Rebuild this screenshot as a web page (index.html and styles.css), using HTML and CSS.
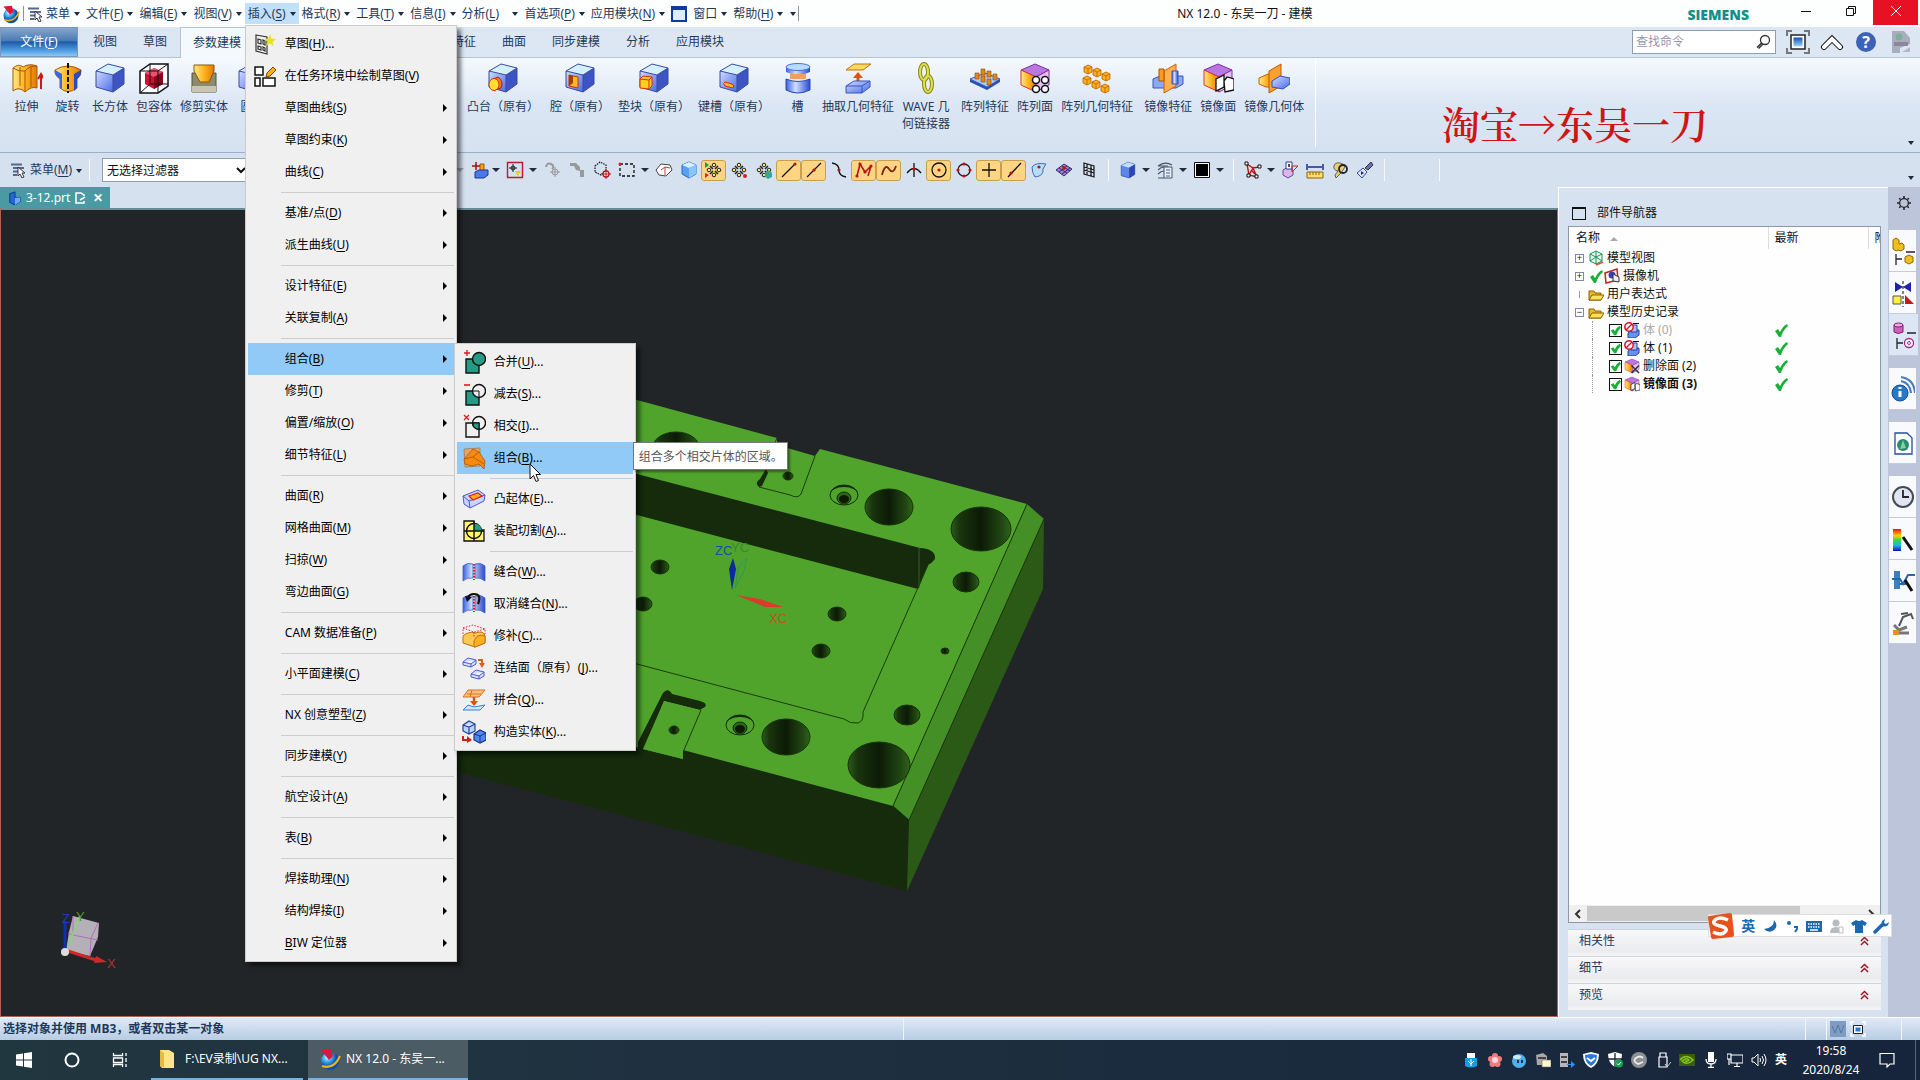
FILE: index.html
```html
<!DOCTYPE html>
<html lang="zh-CN">
<head>
<meta charset="utf-8">
<title>NX 12.0 - 东吴一刀 - 建模</title>
<link rel="stylesheet" href="styles.css">
</head>
<body>
<svg class="defs" width="0" height="0" aria-hidden="true">
  <defs>
    <linearGradient id="gOr" x1="0" x2="1"><stop offset="0" stop-color="#ffe98a"/><stop offset=".5" stop-color="#ffb21e"/><stop offset="1" stop-color="#e07808"/></linearGradient>
    <linearGradient id="gBl" x1="0" y1="0" x2="1" y2="1"><stop offset="0" stop-color="#cfdcff"/><stop offset="1" stop-color="#4a6ae8"/></linearGradient>
    <linearGradient id="gCy" x1="0" x2="1"><stop offset="0" stop-color="#3a5fe0"/><stop offset=".4" stop-color="#cfe0ff"/><stop offset="1" stop-color="#2b48d0"/></linearGradient>
    <linearGradient id="gHole" x1="0" x2="1"><stop offset="0" stop-color="#2c5c1a"/><stop offset=".15" stop-color="#19350e"/><stop offset=".5" stop-color="#0c1a06"/><stop offset=".85" stop-color="#214713"/><stop offset="1" stop-color="#2f6519"/></linearGradient>
    <linearGradient id="gRain" x1="0" y1="0" x2="0" y2="1"><stop offset="0" stop-color="#f01010"/><stop offset=".3" stop-color="#ffd000"/><stop offset=".5" stop-color="#30e040"/><stop offset=".75" stop-color="#20b0f0"/><stop offset="1" stop-color="#1010c0"/></linearGradient>
    <linearGradient id="gWin" x1="0" y1="0" x2="0" y2="1"><stop offset="0" stop-color="#0a50b0"/><stop offset="1" stop-color="#a8d4f4"/></linearGradient>
    <radialGradient id="gBall" cx=".35" cy=".3"><stop offset="0" stop-color="#e0f4ff"/><stop offset=".5" stop-color="#3aaaf0"/><stop offset="1" stop-color="#0a50a0"/></radialGradient>
  </defs>
  <symbol id="cube" viewBox="0 0 32 32"><path d="M2 9 14 2 30 6 19 13z" fill="#d4f0ff"/><path d="M2 9 19 13V30L2 25z" fill="url(#gBl)"/><path d="M19 13 30 6V22L19 30z" fill="#3d55c4"/><path d="M2 9 14 2 30 6 19 13zM2 9V25L19 30V13M19 30 30 22V6" fill="none" stroke="#3a4a9c"/></symbol>
  <symbol id="extrude" viewBox="0 0 32 32"><path d="M2 6Q8 1 12 5Q18 1 26 4V26Q20 24 14 30Q8 24 2 29z" fill="url(#gOr)" stroke="#a85a00"/><path d="M14 9V29M9 5V24M20 4V25" stroke="#a85a00"/><path d="M2 6Q8 10 14 9Q18 4 26 4" fill="none" stroke="#a85a00"/><path d="M30 27V14M27 17l3-5 3 5" stroke="#d01818" stroke-width="2" fill="none"/></symbol>
  <symbol id="revolve" viewBox="0 0 32 32"><path d="M3 8Q16 0 29 8Q30 13 25 17V26Q16 33 8 26V17Q2 13 3 8z" fill="url(#gOr)" stroke="#a85a00"/><path d="M3 8L10 12V27L8 26V17Q2 13 3 8z" fill="#3a66e0"/><path d="M22 12 29 8Q30 13 25 17V26L22 29z" fill="#2a4cc0"/><path d="M16 1V31" stroke="#111" stroke-width="2" stroke-dasharray="5 2"/></symbol>
  <symbol id="boxbody" viewBox="0 0 32 32"><path d="M2 9 12 2H30V24L20 31H2z" fill="#fff" stroke="#111" stroke-width="1.5"/><path d="M7 11 16 6 25 10V22L16 27 7 22z" fill="#d01030"/><path d="M7 11 16 15 25 10 16 6z" fill="#f05070"/><path d="M16 15V27L25 22V10z" fill="#90001c"/><path d="M2 9H20V31M20 9 30 2M12 2V22L2 31M12 22H30" fill="none" stroke="#111"/></symbol>
  <symbol id="trim" viewBox="0 0 32 32"><path d="M4 11H28V30H4z" fill="#8d8a70" stroke="#55553c"/><path d="M4 24H28V30H4z" fill="#c8c6b0"/><path d="M6 3H26V9L21 20H12L6 9z" fill="url(#gOr)" stroke="#8a5a00"/></symbol>
  <symbol id="boss" viewBox="0 0 32 32"><use href="#cube"/><path d="M6 17 11 15Q17 19 14 26L8 28z" fill="#e88010" stroke="#b02000"/><ellipse cx="7" cy="22.500" rx="5" ry="6" fill="#ffe030" stroke="#d03000"/></symbol>
  <symbol id="pocket" viewBox="0 0 32 32"><use href="#cube"/><path d="M5 13 14 15V26L5 24z" fill="#ffb820" stroke="#d03000"/><path d="M5 13 9 14V21L5 24z" fill="#a04000"/></symbol>
  <symbol id="pad" viewBox="0 0 32 32"><use href="#cube"/><path d="M2 17 5 14 14 15V24L11 27 2 26z" fill="#ffd020" stroke="#d03000"/><path d="M2 17 11 18V27M11 18 14 15" fill="none" stroke="#d03000"/></symbol>
  <symbol id="keyway" viewBox="0 0 32 32"><use href="#cube"/><path d="M7 20 14 22Q17 24 15 26L7 24Q4 21 7 20z" fill="#ffb820" stroke="#d03000"/></symbol>
  <symbol id="groove" viewBox="0 0 32 32"><path d="M4 5V10Q16 16 28 10V5z" fill="url(#gCy)"/><ellipse cx="16" cy="5" rx="12" ry="3.500" fill="#b8dcff" stroke="#4a70d0"/><path d="M8 12H24V17H8z" fill="#f0a060"/><path d="M4 17V28Q16 34 28 28V17Q16 22 4 17z" fill="url(#gCy)" stroke="#2b48b0"/></symbol>
  <symbol id="extract" viewBox="0 0 32 32"><path d="M4 8 12 2H29L21 8z" fill="#ffd860" stroke="#c07010"/><path d="M16 21V14" stroke="#e05010" stroke-width="3"/><path d="M11 16 16 10 21 16z" fill="#e05010"/><path d="M4 24 12 19H28V25L20 31H4z" fill="url(#gBl)" stroke="#3a55c0"/><path d="M4 24H20L28 19M20 24V31" fill="none" stroke="#3a55c0"/></symbol>
  <symbol id="wave" viewBox="0 0 32 32"><g fill="none" stroke="#8a8a10" stroke-width="4"><ellipse cx="14" cy="10" rx="4" ry="8"/><ellipse cx="18" cy="22" rx="4" ry="8"/></g><g fill="none" stroke="#dede58" stroke-width="2"><ellipse cx="14" cy="10" rx="4" ry="8"/><ellipse cx="18" cy="22" rx="4" ry="8"/></g></symbol>
  <symbol id="patfeat" viewBox="0 0 32 32"><path d="M1 17 16 11 31 17V20L18 28 1 20z" fill="#2a50b8"/><path d="M1 17 16 11 31 17 18 25z" fill="#a8ccff" stroke="#3a60c0"/><g fill="#e08818" stroke="#8a4a08" stroke-width=".6"><path d="M6 11h4v6H6zM12 7h4v6h-4zM18 9h4v6h-4zM24 12h4v6h-4zM12 14h4v6h-4zM18 17h4v6h-4z"/></g></symbol>
  <symbol id="facecube" viewBox="0 0 32 32"><path d="M2 8 16 2 30 8 17 15z" fill="#b878e0" stroke="#8030a0"/><path d="M2 8 17 15V30L2 23z" fill="url(#gOr)" stroke="#e03030"/><path d="M17 15 30 8V23L17 30z" fill="#e4c0f0" stroke="#8030a0"/></symbol>
  <symbol id="patface" viewBox="0 0 32 32"><use href="#facecube"/><g fill="#fff" stroke="#111" stroke-width="1.500"><circle cx="17" cy="18" r="3.500"/><circle cx="26" cy="18" r="3.500"/><circle cx="17" cy="27" r="3.500"/><circle cx="26" cy="27" r="3.500"/></g></symbol>
  <symbol id="patgeo" viewBox="0 0 32 32"><g fill="#ffb020" stroke="#b86000" stroke-width=".8"><path id="pgc" d="M3 5l4-2 4 2v5l-4 2-4-2zM3 5l4 2v5M7 7l4-2"/><use href="#pgc" x="9" y="3"/><use href="#pgc" x="18" y="7"/><use href="#pgc" x="-1" y="11"/><use href="#pgc" x="8" y="15"/><use href="#pgc" x="17" y="19"/></g></symbol>
  <symbol id="mirfeat" viewBox="0 0 32 32"><path d="M1 17 8 14H31V22L24 26H1z" fill="#8aaaf0" stroke="#3a55c0"/><path d="M12 9 24 2V24L12 31z" fill="#ffb050" stroke="#d06000"/><path d="M7 7h5v12H7z" fill="#ff9a20" stroke="#b05000"/><path d="M20 9h6v13h-6z" fill="url(#gCy)" stroke="#3a55c0"/></symbol>
  <symbol id="mirface" viewBox="0 0 32 32"><use href="#facecube"/><path d="M14 17 22 13V25L14 29zM22 19 25 15 32 17V28L23 30z" fill="#fff" stroke="#111" stroke-width="1.300"/></symbol>
  <symbol id="mirgeo" viewBox="0 0 32 32"><path d="M1 16 10 12H16V25H8L1 22z" fill="url(#gOr)" stroke="#c06000"/><path d="M11 9 23 2V24L11 31z" fill="#f8a030" stroke="#c05800"/><path d="M14 19 22 14 32 16V22L25 27 14 25z" fill="url(#gBl)" stroke="#3050c0"/></symbol>
  <symbol id="nx" viewBox="0 0 24 24"><circle cx="12" cy="14" r="9" fill="url(#gBall)"/><path d="M3 3 13 2 15 9 11 13z" fill="#d8183c"/><path d="M4 19Q16 23 22 9" fill="none" stroke="#f0b020" stroke-width="2"/></symbol>
  <symbol id="menuic" viewBox="0 0 16 16"><path d="M1 2.500H12M3 6H14M3 9.500H10M3 13H7" stroke="#56678c" stroke-width="1.800"/><path d="M8 5V14L10 12 12 16 14 15 12 11H15z" fill="#fff" stroke="#334"/></symbol>
  <symbol id="sketch" viewBox="0 0 24 24"><path d="M3 3 14 5V22L3 19zM5 7 8 8V12L5 11zM10 8 12 9V13L10 12zM5 14 8 15V18L5 17zM10 15 12 16V19L10 18z" fill="none" stroke="#333" stroke-width="1.200"/><path d="M17 2 18.500 6.500 23 7 19.500 10 20.500 14 17 11.500 13 14 14.500 9.500 11 7 15.500 6.500z" fill="#e8e020"/></symbol>
  <symbol id="sketchtask" viewBox="0 0 24 24"><path d="M2 3H10V11H2zM2 14H7V22H2zM10 14H22V22H10z" fill="#fff" stroke="#111" stroke-width="1.500"/><path d="M13 13 14 9 20 3 23 6 17 12z" fill="#ffb010" stroke="#7a4000"/></symbol>
  <symbol id="unite" viewBox="0 0 24 24"><path d="M4 9H17V23H4z" fill="#259a84" stroke="#111" stroke-width="1.400"/><circle cx="17" cy="9" r="6.500" fill="#259a84" stroke="#111" stroke-width="1.400"/><path d="M5 0V6M2 3H8" stroke="#e01818" stroke-width="1.300"/></symbol>
  <symbol id="subtract" viewBox="0 0 24 24"><path d="M4 9H17V23H4z" fill="#259a84" stroke="#111" stroke-width="1.400"/><circle cx="17" cy="9" r="6.500" fill="#efefef" stroke="#111" stroke-width="1.400"/><path d="M10 9H17V16" fill="none" stroke="#111"/><path d="M2 3H8" stroke="#e01818" stroke-width="1.600"/></symbol>
  <symbol id="intersect" viewBox="0 0 24 24"><path d="M4 9H17V23H4z" fill="none" stroke="#111" stroke-width="1.400"/><circle cx="17" cy="9" r="6.500" fill="none" stroke="#111" stroke-width="1.400"/><path d="M11 9H17V15Q11 15 11 9z" fill="#259a84" stroke="#111"/><path d="M2 1 7 6M7 1 2 6" stroke="#e01818" stroke-width="1.300"/></symbol>
  <symbol id="combine" viewBox="0 0 24 24"><path d="M2 3 18 2V20L3 21z" fill="#e8a468" stroke="#a07040" stroke-width=".7"/><path d="M2 13 11 3 17 6 23 15 22 23 17 18 10 20 3 18z" fill="#f88a10" stroke="#a85000" stroke-width=".7"/><path d="M2 13 11 11 22 18M17 6 11 11" fill="none" stroke="#a85000" stroke-width=".8"/></symbol>
  <symbol id="emboss" viewBox="0 0 24 24"><path d="M1 9 16 3 23 8 22 14 8 21 2 17z" fill="#c8d4ff" stroke="#4a5ad0"/><path d="M1 9 7 14 23 8M7 14 8 21" fill="none" stroke="#4a5ad0"/><path d="M7 9 16 6 20 9 11 13z" fill="#ffb020" stroke="#e02020" stroke-width="1.300"/></symbol>
  <symbol id="asmcut" viewBox="0 0 24 24"><path d="M2 2H12V11H22V22H2z" fill="#fff870" stroke="#111" stroke-width="1.300"/><circle cx="12" cy="12" r="7.500" fill="#fff870" stroke="#111" stroke-width="1.400"/><path d="M12 4.500Q20 5 19.500 12H12z" fill="#259a84"/><path d="M2 12H22M12 2V22" stroke="#111" stroke-width="1.400"/></symbol>
  <symbol id="sew" viewBox="0 0 24 24"><path d="M1 6Q5 2 11 4V18Q5 17 1 21zM13 4Q19 2 23 6V21Q18 17 13 18z" fill="url(#gCy)" stroke="#3a60c0" stroke-width=".8"/><path d="M12 4V20" stroke="#e02020" stroke-width="2" stroke-dasharray="1.500 1.500"/></symbol>
  <symbol id="unsew" viewBox="0 0 24 24"><use href="#sew"/><path d="M16 12Q20 2 12 2Q7 2 6 6" fill="none" stroke="#111" stroke-width="2.200"/><path d="M3 4 10 5 5 10z" fill="#111"/></symbol>
  <symbol id="patch" viewBox="0 0 24 24"><path d="M1 12Q6 7 13 9 22 6 23 12V19L13 23 1 19z" fill="#ffc850" stroke="#c07010"/><path d="M12 23V17Q15 9 23 12V19L13 23z" fill="#ffb020" stroke="#c07010"/><path d="M1 10V4L11 1 23 5V10M1 4 12 8 23 5M12 8V14" fill="none" stroke="#e02040" stroke-dasharray="1.500 1.500"/></symbol>
  <symbol id="joinface" viewBox="0 0 24 24"><path id="jf" d="M1 6 6 2 14 4V8L9 11 1 9zM1 6 9 8 14 4M9 8V11" fill="#d8e0ff" stroke="#4a5ad0"/><use href="#jf" x="8" y="12"/><path d="M16 4H20V8" fill="none" stroke="#e06010" stroke-width="2"/><path d="M17 7H23L20 12z" fill="#e06010"/></symbol>
  <symbol id="quilt" viewBox="0 0 24 24"><path d="M1 9 6 2 23 2 17 9z" fill="#ffc080" stroke="#e07020"/><path d="M5 6H19M10 2 8 9" stroke="#e07020"/><path d="M12 9V14" stroke="#e05010" stroke-width="2.500"/><path d="M8 13H16L12 18z" fill="#e05010"/><path d="M1 22 6 17 12 19 23 17 18 22z" fill="#c8e8ff" stroke="#3a80d0"/></symbol>
  <symbol id="solid" viewBox="0 0 24 24"><path d="M1 5 7 1 13 4V11L7 14 1 11zM1 5 7 7 13 4M7 7V14" fill="#b8d4f8" stroke="#2440a0" stroke-width="1.200"/><path d="M12 14 18 10 24 13V20L18 23 12 20z" fill="#5088e8" stroke="#1c3490" stroke-width="1.200"/><path d="M12 14 18 16 24 13M18 16V23" fill="none" stroke="#1c3490"/><path d="M1 16V20H5" fill="none" stroke="#d02010" stroke-width="2"/><path d="M5 16 10 20 5 23z" fill="#d02010"/></symbol>
  <symbol id="check" viewBox="0 0 16 16"><path d="M2 9 5 7 7 10Q10 4 14 2L15 4Q10 8 8 15L6 15z" fill="#18b038"/></symbol>
  <symbol id="folder" viewBox="0 0 16 16"><path d="M1 5H6L7 7H13V14H1z" fill="#e8b830" stroke="#8a6000"/><path d="M1 14 4 9H16L13 14z" fill="#ffe060" stroke="#8a6000"/></symbol>
  <symbol id="bodyic" viewBox="0 0 16 16"><path d="M4 11 8 8H15V13L11 16H4z" fill="#6a90f0" stroke="#2040a0"/><path d="M7 3H13V10H7z" fill="#a8c0ff" stroke="#2040a0"/><circle cx="5" cy="5" r="4.200" fill="#fff" stroke="#d01828" stroke-width="1.500"/><path d="M2 8 8 2" stroke="#d01828" stroke-width="1.500"/><path d="M9 1.500H15" stroke="#111"/></symbol>
  <symbol id="globe" viewBox="0 0 16 16"><path d="M2 4 8 1 14 4V11L8 14 2 11z M2 4 8 7 14 4M8 1V14M2 11 8 7 14 11" fill="#e4fff0" stroke="#18905a"/><path d="M8 15 15 12" stroke="#e05030" stroke-width="1.500"/></symbol>
  <symbol id="camera" viewBox="0 0 16 16"><path d="M1 5 13 1 14 12 2 15z" fill="#fff" stroke="#c82020" stroke-width="1.500"/><circle cx="8" cy="7" r="3.500" fill="#3a40b0"/><path d="M9 6 15 9V14L9 13z" fill="#eee" stroke="#333"/></symbol>
  <symbol id="dots" viewBox="0 0 18 18"><g fill="#ffe860" stroke="#222"><circle cx="9" cy="4" r="1.800"/><circle cx="4" cy="9" r="1.800"/><circle cx="14" cy="9" r="1.800"/><circle cx="9" cy="14" r="1.800"/></g><path d="M5 5 8 8M13 5 10 8M5 13 8 10M13 13 10 10" stroke="#222" stroke-width="1.500"/></symbol>
  <symbol id="smallcube" viewBox="0 0 16 16"><path d="M2 4 8 1 14 3V12L9 15 2 13z" fill="#5c86e8" stroke="#3a55b0" stroke-width=".7"/><path d="M2 4 8 1 14 3 9 6z" fill="#c4dcff"/><path d="M9 6 14 3V12L9 15z" fill="#2c48b0"/></symbol>
  <symbol id="chev" viewBox="0 0 10 10"><path d="M1 5 5 1 9 5M1 9.500 5 5.500 9 9.500" fill="none" stroke="#a01020" stroke-width="1.500"/></symbol>
</svg>

<div class="app">
  <header class="menubar">
    <svg class="i20"><use href="#nx"/></svg><span class="bar"></span><svg class="i16"><use href="#menuic"/></svg>
    <ul class="menus">
      <li><button>菜单<i class="dn"></i></button></li>
      <li><button>文件(<u>F</u>)<i class="dn"></i></button></li>
      <li><button>编辑(<u>E</u>)<i class="dn"></i></button></li>
      <li><button>视图(<u>V</u>)<i class="dn"></i></button></li>
      <li class="open"><button aria-expanded="true">插入(<u>S</u>)<i class="dn"></i></button>
        <ul class="menu">
          <li><button><svg><use href="#sketch"/></svg>草图(<u>H</u>)...</button></li>
          <li><button><svg><use href="#sketchtask"/></svg>在任务环境中绘制草图(<u>V</u>)</button></li>
          <li><button class="sub">草图曲线(<u>S</u>)</button></li>
          <li><button class="sub">草图约束(<u>K</u>)</button></li>
          <li><button class="sub">曲线(<u>C</u>)</button></li>
          <li class="sep"></li>
          <li><button class="sub">基准/点(<u>D</u>)</button></li>
          <li><button class="sub">派生曲线(<u>U</u>)</button></li>
          <li class="sep"></li>
          <li><button class="sub">设计特征(<u>E</u>)</button></li>
          <li><button class="sub">关联复制(<u>A</u>)</button></li>
          <li class="sep"></li>
          <li class="has-sub"><button class="sub active" aria-expanded="true">组合(<u>B</u>)</button>
            <ul class="menu submenu">
              <li><button><svg><use href="#unite"/></svg>合并(<u>U</u>)...</button></li>
              <li><button><svg><use href="#subtract"/></svg>减去(<u>S</u>)...</button></li>
              <li><button><svg><use href="#intersect"/></svg>相交(<u>I</u>)...</button></li>
              <li class="has-sub"><button class="active"><svg><use href="#combine"/></svg>组合(<u>B</u>)...</button>
                <span class="tooltip" role="tooltip">组合多个相交片体的区域。</span>
                <svg class="cursor" viewBox="0 0 12 20"><path d="M1 1V16L4.500 12.500 7 18.500 9.500 17.500 7 11.500H11.500z" fill="#fff" stroke="#111"/></svg>
              </li>
              <li class="sep"></li>
              <li><button><svg><use href="#emboss"/></svg>凸起体(<u>E</u>)...</button></li>
              <li><button><svg><use href="#asmcut"/></svg>装配切割(<u>A</u>)...</button></li>
              <li class="sep"></li>
              <li><button><svg><use href="#sew"/></svg>缝合(<u>W</u>)...</button></li>
              <li><button><svg><use href="#unsew"/></svg>取消缝合(<u>N</u>)...</button></li>
              <li><button><svg><use href="#patch"/></svg>修补(<u>C</u>)...</button></li>
              <li><button><svg><use href="#joinface"/></svg>连结面（原有）(<u>J</u>)...</button></li>
              <li><button><svg><use href="#quilt"/></svg>拼合(<u>Q</u>)...</button></li>
              <li><button><svg><use href="#solid"/></svg>构造实体(<u>K</u>)...</button></li>
            </ul>
          </li>
          <li><button class="sub">修剪(<u>T</u>)</button></li>
          <li><button class="sub">偏置/缩放(<u>O</u>)</button></li>
          <li><button class="sub">细节特征(<u>L</u>)</button></li>
          <li class="sep"></li>
          <li><button class="sub">曲面(<u>R</u>)</button></li>
          <li><button class="sub">网格曲面(<u>M</u>)</button></li>
          <li><button class="sub">扫掠(<u>W</u>)</button></li>
          <li><button class="sub">弯边曲面(<u>G</u>)</button></li>
          <li class="sep"></li>
          <li><button class="sub">CAM 数据准备(<u>P</u>)</button></li>
          <li class="sep"></li>
          <li><button class="sub">小平面建模(<u>C</u>)</button></li>
          <li class="sep"></li>
          <li><button class="sub">NX 创意塑型(<u>Z</u>)</button></li>
          <li class="sep"></li>
          <li><button class="sub">同步建模(<u>Y</u>)</button></li>
          <li class="sep"></li>
          <li><button class="sub">航空设计(<u>A</u>)</button></li>
          <li class="sep"></li>
          <li><button class="sub">表(<u>B</u>)</button></li>
          <li class="sep"></li>
          <li><button class="sub">焊接助理(<u>N</u>)</button></li>
          <li><button class="sub">结构焊接(<u>I</u>)</button></li>
          <li><button class="sub"><u>B</u>IW 定位器</button></li>
        </ul>
      </li>
      <li><button>格式(<u>R</u>)<i class="dn"></i></button></li>
      <li><button>工具(<u>T</u>)<i class="dn"></i></button></li>
      <li><button>信息(<u>I</u>)<i class="dn"></i></button></li>
      <li><button>分析(<u>L</u>)&nbsp;&nbsp;&nbsp;<i class="dn"></i></button></li>
      <li><button>首选项(<u>P</u>)<i class="dn"></i></button></li>
      <li><button>应用模块(<u>N</u>)<i class="dn"></i></button></li>
      <li class="win"><svg class="i16" viewBox="0 0 16 16"><path d="M1 1H15V15H1z" fill="#dcecff" stroke="#123a9a" stroke-width="2"/><path d="M1 1H15V4H1z" fill="#123a9a"/></svg></li>
      <li><button>窗口<i class="dn"></i></button></li>
      <li><button>帮助(<u>H</u>)<i class="dn"></i></button></li>
      <li><i class="dn over"></i></li>
    </ul>
    <span class="bar"></span>
    <h1>NX 12.0 - 东吴一刀 - 建模</h1>
    <strong class="siemens">SIEMENS</strong>
    <div class="winctl">
      <button aria-label="最小化"><svg viewBox="0 0 12 12"><path d="M1 6.500H11" stroke="#111"/></svg></button>
      <button aria-label="还原"><svg viewBox="0 0 12 12"><path d="M1.500 3.500H8.500V10.500H1.500zM3.500 3.500V1.500H10.500V8.500H8.500" fill="none" stroke="#111"/></svg></button>
      <button class="close" aria-label="关闭"><svg viewBox="0 0 12 12"><path d="M1 1 11 11M11 1 1 11" stroke="#fff"/></svg></button>
    </div>
  </header>

  <nav class="tabs">
    <button class="file">文件(<u>F</u>)</button>
    <button>视图</button><button>草图</button><button class="on">参数建模</button>
    <span class="tabgap"></span>
    <button>特征</button><button>曲面</button><button>同步建模</button><button>分析</button><button>应用模块</button>
    <div class="search"><input type="text" aria-label="查找命令" placeholder="查找命令"><svg viewBox="0 0 16 16"><circle cx="10" cy="6" r="4.500" fill="none" stroke="#333" stroke-width="1.300"/><path d="M7 8.500 2 13.500M8 10 3.500 14.500" stroke="#333" stroke-width="1.500"/></svg></div>
    <svg class="ti" viewBox="0 0 24 24"><path d="M1 6V1H6M18 1H23V6M23 18V23H18M6 23H1V18" fill="none" stroke="#777" stroke-width="2"/><path d="M5 5H19V19H5z" fill="#fff" stroke="#222" stroke-width="1.500"/><path d="M7.500 7.500H16.500V16.500H7.500z" fill="url(#gWin)"/></svg>
    <svg class="ti" viewBox="0 0 24 24"><path d="M4 17 12 9 20 17" fill="none" stroke="#111" stroke-width="6" stroke-linecap="round"/><path d="M4 17 12 9 20 17" fill="none" stroke="#fff" stroke-width="4" stroke-linecap="round"/></svg>
    <span class="help">?</span>
    <svg class="ti" viewBox="0 0 24 24"><path d="M3 1H15L21 8V14L11 18V23H3z" fill="#a9aebd"/><circle cx="10" cy="7" r="3.500" fill="#7fae9c"/><path d="M5 12H19V16H5z" fill="#8d84a0"/><path d="M13 22 21 17V22z" fill="#b4b6c4"/></svg>
  </nav>

  <section class="ribbon">
    <div class="rgroup first">
      <button><svg><use href="#extrude"/></svg>拉伸</button>
      <button><svg><use href="#revolve"/></svg>旋转</button>
      <button><svg><use href="#cube"/></svg>长方体</button>
      <button><svg><use href="#boxbody"/></svg>包容体</button>
      <button><svg><use href="#trim"/></svg>修剪实体</button>
      <button><svg><use href="#cube"/></svg>圆柱</button>
    </div>
    <div class="rgroup"><button><svg><use href="#boss"/></svg>凸台（原有）</button></div>
    <div class="rgroup">
      <button><svg><use href="#pocket"/></svg>腔（原有）</button>
      <button><svg><use href="#pad"/></svg>垫块（原有）</button>
      <button><svg><use href="#keyway"/></svg>键槽（原有）</button>
    </div>
    <div class="rgroup">
      <button><svg><use href="#groove"/></svg>槽</button>
      <button><svg><use href="#extract"/></svg>抽取几何特征</button>
      <button><svg><use href="#wave"/></svg>WAVE 几<br>何链接器</button>
    </div>
    <div class="rgroup">
      <button><svg><use href="#patfeat"/></svg>阵列特征</button>
      <button><svg><use href="#patface"/></svg>阵列面</button>
      <button><svg><use href="#patgeo"/></svg>阵列几何特征</button>
    </div>
    <div class="rgroup last">
      <button><svg><use href="#mirfeat"/></svg>镜像特征</button>
      <button><svg><use href="#mirface"/></svg>镜像面</button>
      <button><svg><use href="#mirgeo"/></svg>镜像几何体</button>
    </div>
    <p class="watermark">淘宝→东吴一刀</p>
    <i class="dn end"></i>
  </section>

  <section class="toolbar">
    <div class="tleft">
      <svg class="i16"><use href="#menuic"/></svg><button>菜单(<u>M</u>)<i class="dn"></i></button><span class="tsep"></span>
      <select aria-label="选择过滤器"><option>无选择过滤器</option></select>
      <i class="dn big grey"></i>
    </div>
    <button class="t n" aria-label="选择优先"><svg viewBox="0 0 18 18"><path d="M5 1V9M1 5H9" stroke="#a01010" stroke-width="1.500"/><path d="M9 3H13V10H9z" fill="#ffa020" stroke="#a05000"/><path d="M4 11 8 9H17V14L13 17H4z" fill="#4a78e8" stroke="#1c3490"/></svg></button><i class="dn big"></i>
    <button class="t" aria-label="过滤"><svg viewBox="0 0 18 18"><path d="M1.500 1.500H16.500V16.500H1.500z" fill="none" stroke="#c01830" stroke-width="1.400"/><path d="M7 3V11M3 7H11" stroke="#222"/><circle cx="7" cy="7" r="2" fill="none" stroke="#222"/><path d="M9 10H15L12.500 13V16L11 14z" fill="#ffc020"/></svg></button><i class="dn big"></i>
    <button class="t" aria-label="撤销选择"><svg viewBox="0 0 18 18"><path d="M3 6Q4 1 8 3T9 8" fill="none" stroke="#999" stroke-width="2"/><circle cx="12" cy="11" r="3" fill="none" stroke="#999"/><path d="M12 6V16M7 11H17" stroke="#999"/></svg></button>
    <button class="t" aria-label="查找"><svg viewBox="0 0 18 18"><path d="M2 2H8L12 6V9H16V16H12V10L8 9 6 5H2z" fill="#999"/></svg></button>
    <button class="t" aria-label="隐藏边"><svg viewBox="0 0 18 18"><path d="M2 5 7 1 13 4V9L8 14 2 11z" fill="none" stroke="#222" stroke-width="1.300" stroke-dasharray="1.500 1"/><circle cx="13" cy="13" r="3" fill="#fff" stroke="#c01020" stroke-width="1.300"/><path d="M13 8V18M8 13H18" stroke="#c01020"/></svg></button>
    <button class="t" aria-label="矩形"><svg viewBox="0 0 18 18"><path d="M2 3H16V15H2z" fill="none" stroke="#111" stroke-width="1.300" stroke-dasharray="3 2"/><circle cx="2" cy="3" r="1.500" fill="#e02020"/></svg></button><i class="dn big"></i>
    <button class="t" aria-label="着色"><svg viewBox="0 0 18 18"><path d="M1 9 6 3 15 4 17 9 11 15 4 14z" fill="#fff" stroke="#444"/><path d="M6 9 10 6 15 7M10 6V14" stroke="#c04040" fill="none"/></svg></button>
    <button class="t" aria-label="实体"><svg viewBox="0 0 18 18"><path d="M2 4 9 1 16 4V13L9 17 2 13z" fill="#58a0f0" stroke="#2868c0"/><path d="M2 4 9 7 16 4 9 1z" fill="#d8f0ff"/><path d="M9 7V17L16 13V4z" fill="#88c4ff"/></svg></button>
    <button class="t on" aria-label="捕捉点"><svg viewBox="0 0 18 18"><use href="#dots"/><path d="M0 1 4 4 0 7z" fill="#18a030"/><path d="M0 12 4 14 0 17z" fill="#e02020"/></svg></button>
    <button class="t" aria-label="清除捕捉"><svg viewBox="0 0 18 18"><use href="#dots"/><circle cx="15" cy="15" r="2" fill="#d02020"/></svg></button>
    <button class="t" aria-label="添加捕捉"><svg viewBox="0 0 18 18"><use href="#dots"/><path d="M10 12 14 9 17 12V16L13 18 10 16z" fill="#3aa890"/></svg></button>
    <button class="t on" aria-label="端点"><svg viewBox="0 0 18 18"><path d="M2 16 15 3" stroke="#111" stroke-width="1.300"/><circle cx="15" cy="3" r="1.600" fill="#c01010"/></svg></button>
    <button class="t on" aria-label="中点"><svg viewBox="0 0 18 18"><path d="M2 16 16 2" stroke="#111" stroke-width="1.300"/><circle cx="9" cy="9" r="1.600" fill="#c01010"/></svg></button>
    <button class="t" aria-label="控制点"><svg viewBox="0 0 18 18"><path d="M2 2Q9 3 9 9T16 16" fill="none" stroke="#111" stroke-width="1.300"/><circle cx="9" cy="9" r="1.600" fill="#c01010"/></svg></button>
    <button class="t on" aria-label="极点"><svg viewBox="0 0 18 18"><path d="M2 15 5 3 10 11 16 5 13 15" fill="none" stroke="#b01010" stroke-width="1.500"/><g fill="#c01010"><circle cx="2" cy="15" r="1.600"/><circle cx="5" cy="3" r="1.600"/><circle cx="10" cy="11" r="1.600"/><circle cx="16" cy="5" r="1.600"/></g></svg></button>
    <button class="t on" aria-label="曲线上点"><svg viewBox="0 0 18 18"><path d="M2 14Q5 2 9 8T16 5" fill="none" stroke="#802010" stroke-width="1.800"/></svg></button>
    <button class="t" aria-label="交点"><svg viewBox="0 0 18 18"><path d="M9 2V16M2 12Q9 3 16 12" fill="none" stroke="#111" stroke-width="1.300"/><circle cx="9" cy="8" r="1.600" fill="#c01010"/></svg></button>
    <button class="t on" aria-label="圆心"><svg viewBox="0 0 18 18"><circle cx="9" cy="9" r="7" fill="none" stroke="#111" stroke-width="1.300"/><circle cx="9" cy="9" r="1.600" fill="#c01010"/></svg></button>
    <button class="t" aria-label="象限点"><svg viewBox="0 0 18 18"><circle cx="9" cy="9" r="6" fill="none" stroke="#222" stroke-width="1.300"/><g fill="#c01010"><circle cx="9" cy="3" r="1.600"/><circle cx="9" cy="15" r="1.600"/><circle cx="3" cy="9" r="1.600"/><circle cx="15" cy="9" r="1.600"/></g></svg></button>
    <button class="t on" aria-label="现有点"><svg viewBox="0 0 18 18"><path d="M9 2V16M2 9H16" stroke="#111" stroke-width="1.300"/></svg></button>
    <button class="t on" aria-label="线上点"><svg viewBox="0 0 18 18"><path d="M3 16 16 2" stroke="#111" stroke-width="1.300"/><circle cx="6" cy="12" r="1.600" fill="#c01010"/></svg></button>
    <button class="t" aria-label="面上点"><svg viewBox="0 0 18 18"><path d="M2 6Q6 1 16 3L13 8Q14 15 5 16Q2 12 2 6z" fill="#b8dcf8" stroke="#3a70b8"/><circle cx="9" cy="6" r="1.600" fill="#c01010"/></svg></button>
    <button class="t" aria-label="网格点"><svg viewBox="0 0 18 18"><path d="M1 9 9 3 17 8 9 15z" fill="#a87cc8" stroke="#303070"/><path d="M4 11 12 5M7 13 15 7M4 7 12 12M7 5 15 10" stroke="#303070"/><circle cx="9" cy="7" r="1.800" fill="#c01010"/></svg></button>
    <button class="t" aria-label="栅格"><svg viewBox="0 0 18 18"><path d="M4 2 14 5V16L4 13zM7 3V14M11 4V15M4 6 14 9M4 9 14 12" fill="none" stroke="#222" stroke-width="1.300"/></svg></button>
    <span class="tsep"></span>
    <button class="t" aria-label="渲染"><svg><use href="#smallcube"/></svg></button><i class="dn big"></i>
    <button class="t" aria-label="图层"><svg viewBox="0 0 18 18"><path d="M2 5Q9 0 16 4M2 9Q5 6 8 6M2 13Q5 10 8 10M2 17H8M2 5H12" fill="none" stroke="#456" stroke-width="1.200"/><path d="M8 6H16V17H8z" fill="#e8f0ff" stroke="#456"/><path d="M10 9H14M10 12H14M10 15H14" stroke="#3a60b0"/></svg></button><i class="dn big"></i>
    <button class="t" aria-label="背景色"><svg viewBox="0 0 18 18"><path d="M1.500 1.500H16.500V16.500H1.500z" fill="#fff" stroke="#111"/><path d="M3 3H15V15H3z" fill="#000"/></svg></button><i class="dn big"></i>
    <span class="tsep"></span>
    <button class="t" aria-label="测量点"><svg viewBox="0 0 18 18"><path d="M3 3 9 7 15 6M3 3 5 14 13 16 9 7 5 14M7 9 11 13" fill="none" stroke="#b01818" stroke-width="1.400"/><g fill="#fff" stroke="#111"><path d="M1 1H4V4H1zM14 4H17V7H14zM3 13H6V16H3zM11 14H14V17H11z"/></g></svg></button><i class="dn big"></i>
    <button class="t" aria-label="测量体"><svg viewBox="0 0 18 18"><path d="M2 9 7 6 12 9V14L7 17 2 14z" fill="#d8b8e8" stroke="#7040a0"/><path d="M5 1H11V8H5z" fill="#fff" stroke="#2040a0"/><path d="M8 3V6" stroke="#111" stroke-width="1.500"/><path d="M11 5H17L11 11z" fill="none" stroke="#d02020"/></svg></button>
    <button class="t" aria-label="测量距离"><svg viewBox="0 0 18 18"><path d="M1 3V9M17 3V9M2 6H16" stroke="#1c2c90" stroke-width="1.500"/><path d="M1 11H17V17H1z" fill="#ffe070" stroke="#906000"/><path d="M4 11V14M7 11V14M10 11V14M13 11V14" stroke="#906000"/></svg></button>
    <button class="t" aria-label="查找部件"><svg viewBox="0 0 18 18"><path d="M3 5Q4 1 9 2T14 6L10 12 5 17 4 14 7 10Q2 9 3 5z" fill="#e8d070" stroke="#606060"/><circle cx="12" cy="8" r="4" fill="none" stroke="#222" stroke-width="1.800"/></svg></button>
    <button class="t" aria-label="检查"><svg viewBox="0 0 18 18"><path d="M9 7 15 1 17 4 12 9z" fill="#6a70a8" stroke="#334"/><path d="M1 12 7 7 11 11 6 17z" fill="#dfe6fa" stroke="#334a90"/><path d="M5 10V14L8 12z" fill="#1c2c60"/></svg></button>
    <span class="tsep"></span><span class="tspace"></span><span class="tsep"></span>
    <i class="dn end"></i>
  </section>

  <main>
    <div class="work">
      <div class="doctab"><svg viewBox="0 0 16 16"><path d="M2 3 8 1V8L14 7V12L8 16 2 13z" fill="#2468d8" stroke="#0a3080"/><path d="M8 8 14 7V12L8 16z" fill="#70a8f8"/></svg>3-12.prt<svg class="dd" viewBox="0 0 11 14"><path d="M9 5V4L6 2H1V12H9V10" fill="none" stroke="#fff" stroke-width="1.500"/><path d="M5 9 10 6" stroke="#fff" stroke-width="1.500"/></svg><button aria-label="关闭部件">✕</button></div>
      <div class="view">
        <svg viewBox="1 209 1556 806" preserveAspectRatio="xMidYMid slice">
          <path d="M300 560 458 771 907 890 909 819 893 805 683 749 637 738 300 640z" fill="#152b0b"/>
          <path d="M300 308 637 399 777 437 777 444 815 455 820 448 1027 503 893 805 683 749V758L643 748 300 660z" fill="#50a42b"/>
          <path d="M777 437 772 449M815 455 801 493Q798 498 790 494L759 486" fill="none" stroke="#1c3d0f"/>
          <path d="M1027 503 1044 518 909 819 893 805z" fill="#449027"/>
          <path d="M1044 518 1043 588 907 890 909 819z" fill="#2a5a16"/>
          <path d="M1027 503 893 805 909 819 1044 518" fill="none" stroke="#1a380e"/>
          <path d="M500 437 637 473 920 547Q936 548 935 558 932 562 928 564L918 588 637 514 500 478z" fill="#152b0b"/>
          <path d="M919 547V587" stroke="#3f5b33"/>
          <path d="M928 564 863 711Q864 720 858 722 850 723 844 718L637 663 500 625" fill="none" stroke="#1c3d0f"/>
          <path d="M663 692Q668 686 672 693L700 700Q708 702 705 706 701 708 700 709L664 700 645 747 638 750V741z" fill="#152b0b"/>
          <path d="M664 700 700 709 683 749V758L643 748z" fill="#50a42b"/><path d="M701 709 684 749" stroke="#1c3d0f"/>
          <path d="M759 486Q754 482 760 478L766 468 768 472 762 485z" fill="#152b0b"/>
          <g fill="url(#gHole)" stroke="#173409">
            <ellipse cx="981" cy="528" rx="30" ry="22"/><ellipse cx="889" cy="506" rx="24" ry="18"/><ellipse cx="966" cy="581" rx="13" ry="10"/><ellipse cx="945" cy="650" rx="4" ry="3"/><ellipse cx="837" cy="613" rx="9" ry="7"/><ellipse cx="821" cy="650" rx="9" ry="7"/><ellipse cx="907" cy="714" rx="13" ry="10"/><ellipse cx="879" cy="764" rx="31" ry="23"/><ellipse cx="786" cy="736" rx="24" ry="18"/><ellipse cx="660" cy="566" rx="9" ry="7"/><ellipse cx="643" cy="603" rx="9" ry="7"/><ellipse cx="676" cy="448" rx="24" ry="17"/><ellipse cx="674" cy="729" rx="5" ry="4"/><ellipse cx="788" cy="475" rx="5" ry="4"/>
          </g>
          <g id="csink"><ellipse cx="844" cy="494" rx="14" ry="10" fill="#50a42b" stroke="#152b0b"/><path d="M830 494A14 10 0 0 1 858 494 14 8 0 0 0 830 494z" fill="#152b0b"/><ellipse cx="844" cy="497" rx="7" ry="6" fill="#2f6519" stroke="#152b0b"/><ellipse cx="844" cy="498" rx="5" ry="4" fill="#0c1a06"/></g>
          <use href="#csink" x="-104" y="230"/>
          <path d="M732 589 729 568 733 557 736 568z" fill="#0c2a9c"/>
          <path d="M735 587 739 565 747 557 744 570z" fill="none" stroke="#2c9a50"/>
          <path d="M736 594 760 598 783 606 765 606z" fill="#d83c2c"/>
          <g class="axis"><text x="715" y="554" fill="#1450a8">ZC</text><text x="731" y="551" fill="#3a8a2c">YC</text><text x="769" y="622" fill="#c8501c">XC</text></g>
          <path d="M73 915 99 922 98 936 90 955 66 950 69 931z" fill="#b4b0b8"/>
          <path d="M73 915V934L98 939M68 932 73 934M91 937 98 922M90 955 91 937" fill="none" stroke="#b070b8"/>
          <path d="M80 915 68 945" stroke="#90d080" stroke-width="2"/>
          <path d="M65 950V920" stroke="#1030b0" stroke-width="3"/><path d="M68 950 96 959" stroke="#d02828" stroke-width="3"/><path d="M96 955 107 961 94 962z" fill="#d02828"/><circle cx="65" cy="951" r="4" fill="#dcdcdc"/>
          <g class="axis"><text x="62" y="922" fill="#1c3cc0">Z</text><text x="76" y="920" fill="#4a9a20">Y</text><text x="107" y="967" fill="#b03030">X</text></g>
        </svg>
      </div>
    </div>

    <aside class="dock">
      <div class="panel">
        <h2><i></i>部件导航器</h2>
        <div class="treebox">
          <table>
            <colgroup><col><col class="c2"><col class="c3"></colgroup>
            <thead><tr><th>名称<i class="up"></i></th><th>最新</th><th>附</th></tr></thead>
            <tbody>
              <tr><td><span class="row"><b class="ex">+</b><svg><use href="#globe"/></svg>模型视图</span></td><td></td><td></td></tr>
              <tr><td><span class="row"><b class="ex">+</b><svg><use href="#check"/></svg><svg><use href="#camera"/></svg>摄像机</span></td><td></td><td></td></tr>
              <tr><td><span class="row"><b class="ex none"></b><svg><use href="#folder"/></svg>用户表达式</span></td><td></td><td></td></tr>
              <tr><td><span class="row"><b class="ex">−</b><svg><use href="#folder"/></svg>模型历史记录</span></td><td></td><td></td></tr>
              <tr><td><label class="row kid dim"><input type="checkbox" checked><svg><use href="#bodyic"/></svg>体 (0)</label></td><td><svg><use href="#check"/></svg></td><td></td></tr>
              <tr><td><label class="row kid"><input type="checkbox" checked><svg><use href="#bodyic"/></svg>体 (1)</label></td><td><svg><use href="#check"/></svg></td><td></td></tr>
              <tr><td><label class="row kid"><input type="checkbox" checked><svg viewBox="0 0 32 32"><use href="#facecube"/><path d="M15 15 30 30M30 15 15 30" stroke="#333" stroke-width="3"/></svg>删除面 (2)</label></td><td><svg><use href="#check"/></svg></td><td></td></tr>
              <tr><td><label class="row kid cur"><input type="checkbox" checked><svg><use href="#mirface"/></svg>镜像面 (3)</label></td><td><svg><use href="#check"/></svg></td><td></td></tr>
            </tbody>
          </table>
          <div class="hscroll"><svg viewBox="0 0 16 16"><path d="M10 4 6 8 10 12" fill="none" stroke="#333" stroke-width="2"/></svg><span></span><svg viewBox="0 0 16 16"><path d="M6 4 10 8 6 12" fill="none" stroke="#333" stroke-width="2"/></svg></div>
        </div>
        <div class="grip"></div>
        <button class="acc">相关性<svg><use href="#chev"/></svg></button>
        <button class="acc">细节<svg><use href="#chev"/></svg></button>
        <button class="acc">预览<svg><use href="#chev"/></svg></button>
        <div class="ime">
          <svg class="sg" viewBox="0 0 28 28"><path d="M2 4 23 1Q25 1 25 3L27 22Q27 25 25 25L6 27Q4 27 4 25L1 6Q1 4 2 4z" fill="#e8501c"/><path d="M21 8Q12 4 8 8T13 14 18 20 6 20" fill="none" stroke="#fff" stroke-width="3.500"/></svg>
          <b>英</b>
          <svg viewBox="0 0 16 16"><path d="M12 2Q12 10 2 11 7 16 12 12T12 2z" fill="#1c68b0"/></svg>
          <svg viewBox="0 0 16 16"><circle cx="5" cy="5" r="2" fill="#1c68b0"/><path d="M10 9H13V11L11 14" fill="none" stroke="#1c68b0" stroke-width="2"/></svg>
          <svg viewBox="0 0 16 16"><path d="M0 3H16V14H0z" fill="#1c68b0"/><path d="M2 6H14M2 9H14" stroke="#fff" stroke-width="1.500" stroke-dasharray="1.500 1"/><path d="M4 12H12" stroke="#fff" stroke-width="1.500"/></svg>
          <svg viewBox="0 0 16 16"><circle cx="8" cy="5" r="3.500" fill="#b8bcc4"/><path d="M2 15Q2 9 8 9T14 15z" fill="#b8bcc4"/><path d="M11 9H15V15H11z" fill="#fff" stroke="#b8bcc4"/></svg>
          <svg viewBox="0 0 16 16"><path d="M5 2Q8 4 11 2L16 5 14 8 12 7V15H4V7L2 8 0 5z" fill="#1c68b0"/></svg>
          <svg viewBox="0 0 16 16"><path d="M2 14 9 7" stroke="#1c68b0" stroke-width="3.500" stroke-linecap="round"/><path d="M9 8Q7 3 12 1L11 5 13 6 16 4Q15 10 9 8z" fill="#1c68b0"/></svg>
        </div>
      </div>
      <div class="res">
        <button class="gear" aria-label="资源条选项"><svg viewBox="0 0 16 16"><circle cx="8" cy="8" r="5" fill="none" stroke="#222" stroke-width="1.500"/><path d="M8 0V3M8 13V16M0 8H3M13 8H16M2.500 2.500 4 4M12 12 13.500 13.500M2.500 13.500 4 12M12 4 13.500 2.500" stroke="#222" stroke-width="1.800"/></svg></button>
        <div>
          <button aria-label="装配导航器"><svg viewBox="0 0 24 28"><path d="M2 3 5 1 8 3V7L11 6 13 8V12L10 14 7 13 5 14 2 12z" fill="#f0c020" stroke="#906800"/><path d="M5 17V28M5 22H11M15 15H24" stroke="#223" stroke-width="1.300" fill="none"/><path d="M14 20 18 18 22 20V25L18 27 14 25z" fill="#f0c020" stroke="#906800"/></svg></button>
          <button aria-label="约束导航器"><svg viewBox="0 0 24 28"><path d="M4 3 12 8 4 13zM20 3 12 8 20 13z" fill="#2020b0"/><path d="M12 2V28" stroke="#111" stroke-dasharray="3 2"/><path d="M2 17H10V25H2z" fill="#fff040" stroke="#555"/><path d="M14 16 23 25H14z" fill="#c81818"/></svg></button>
          <button class="on" aria-label="部件导航器"><svg viewBox="0 0 24 28"><path d="M2 4V11Q6 14 11 11V4z" fill="#d060b8" stroke="#80206c"/><ellipse cx="6.500" cy="4" rx="4.500" ry="2" fill="#f0a8e0" stroke="#80206c"/><path d="M5 17V28M5 22H11M15 12H24" stroke="#223" stroke-width="1.300"/><circle cx="17" cy="22" r="4.500" fill="#fff" stroke="#a02888" stroke-width="1.300"/><circle cx="17" cy="22" r="1.500" fill="none" stroke="#a02888"/></svg></button>
        </div>
        <div><button aria-label="信息"><svg viewBox="0 0 24 28"><circle cx="9" cy="18" r="8" fill="#2878c8" stroke="#1050a0"/><path d="M9 16V22M9 12V14" stroke="#fff" stroke-width="3"/><path d="M10 6Q19 8 20 18M10 2Q23 4 24 18" fill="none" stroke="#4a7cc0" stroke-width="2.200"/></svg></button></div>
        <div><button aria-label="网页"><svg viewBox="0 0 24 28"><path d="M4 4H16L21 9V25H4z" fill="#fff" stroke="#2050a0" stroke-width="1.300"/><circle cx="12" cy="16" r="6" fill="#2c8a70"/><path d="M9 20 12 11 15 19z" fill="#80d0a0"/></svg></button></div>
        <div>
          <button aria-label="历史记录"><svg viewBox="0 0 24 28"><circle cx="12" cy="14" r="10" fill="#dfe6f0" stroke="#444c58" stroke-width="2"/><path d="M12 7V14H18" fill="none" stroke="#223" stroke-width="1.800"/></svg></button>
          <button aria-label="可视化"><svg viewBox="0 0 24 28"><path d="M2 4H10V26H2z" fill="url(#gRain)"/><path d="M12 12 21 25" stroke="#111" stroke-width="3"/></svg></button>
          <button aria-label="加工"><svg viewBox="0 0 24 28"><path d="M3 4H9V22H3z" fill="#3a80c0"/><path d="M1 12H9L12 17 17 8H24M8 17H15" fill="none" stroke="#2868a8" stroke-width="2"/><path d="M14 13 21 24" stroke="#111" stroke-width="3"/></svg></button>
          <button aria-label="机器人"><svg viewBox="0 0 24 28"><path d="M8 17 12 8 20 5 22 10M10 5 17 4" fill="none" stroke="#555" stroke-width="2"/><path d="M3 16 8 21 16 18M8 24H18" fill="none" stroke="#777" stroke-width="3"/><path d="M2 21H8V26H2z" fill="#e8901c"/></svg></button>
        </div>
      </div>
    </aside>
  </main>

  <footer class="status"><span>选择对象并使用 MB3，或者双击某一对象</span><i></i><i class="cell"></i>
    <div><svg viewBox="0 0 16 16"><path d="M0 0H16V16H0z" fill="#7f9dc4"/><path d="M2 5 5 12 8 4 11 12 14 4" fill="none" stroke="#56789c"/></svg><svg viewBox="0 0 16 16"><path d="M1 4V1H4M12 1H15V4M15 12V15H12M4 15H1V12" fill="none" stroke="#fff" stroke-width="1.500"/><path d="M3.500 4.500H12.500V12.500H3.500z" fill="#fff" stroke="#222"/><path d="M5.500 6.500H10.500V10.500H5.500z" fill="#2878d0"/></svg></div>
  </footer>

  <footer class="taskbar">
    <button class="k" aria-label="开始"><svg viewBox="0 0 16 16"><path d="M0 2.500 7 1.500V7.500H0zM8 1.300 16 0V7.500H8zM0 8.500H7V14.500L0 13.500zM8 8.500H16V16L8 14.700z" fill="#fff"/></svg></button>
    <button class="k" aria-label="搜索"><svg viewBox="0 0 16 16"><circle cx="8" cy="8" r="6.500" fill="none" stroke="#fff" stroke-width="2"/></svg></button>
    <button class="k" aria-label="任务视图"><svg viewBox="0 0 16 16"><path d="M1.500 1V3.500H10.500V1M1.500 15V12.500H10.500V15M1.500 6H10.500V10.500H1.500zM14 1V4M14 6V10M14 12V15" fill="none" stroke="#fff" stroke-width="1.300"/></svg></button>
    <button class="app1"><svg viewBox="0 0 20 20"><path d="M3 1H12L17 4V19H5L3 17z" fill="#ffe48a"/><path d="M3 1 7 4V19L3 17z" fill="#e8b840"/></svg>F:\EV录制\UG NX...</button>
    <button class="app1 cur"><svg><use href="#nx"/></svg>NX 12.0 - 东吴一...</button>
    <div class="tray">
      <svg viewBox="0 0 16 16"><path d="M4 1H12V6H4z" fill="#fff"/><path d="M2 6H14V14Q8 17 2 14z" fill="#1c9ce0"/><path d="M8 7V14M5 9 8 12 11 9" fill="none" stroke="#fff"/></svg>
      <svg viewBox="0 0 16 16"><g fill="#f07c80"><circle cx="8" cy="4" r="3"/><circle cx="4" cy="7" r="3"/><circle cx="12" cy="7" r="3"/><circle cx="5.500" cy="12" r="3"/><circle cx="10.500" cy="12" r="3"/></g><circle cx="8" cy="8" r="3" fill="#ffd8dc"/></svg>
      <svg viewBox="0 0 16 16"><circle cx="8" cy="9" r="7" fill="#4cb0f0"/><ellipse cx="6" cy="5" rx="4" ry="2" fill="#c8ecff"/><path d="M7 8V11M11 8V11" stroke="#111" stroke-width="1.500"/></svg>
      <svg viewBox="0 0 16 16"><path d="M1 3 8 1 12 4V13H2z" fill="#a8a8a8"/><path d="M3 6H11" stroke="#444" stroke-width="2"/><path d="M7 8H16V15H7z" fill="#fff8d0" stroke="#666" stroke-width=".6"/></svg>
      <svg viewBox="0 0 16 16"><path d="M1 1H9V15H1z" fill="#b8b8b8"/><path d="M2 5H8M2 10H8" stroke="#444" stroke-width="2"/><path d="M8 12H12V9L16 12.500 12 16V13H8z" fill="#2c90f0"/></svg>
      <svg viewBox="0 0 16 16"><path d="M0 2 8 0 16 2Q16 12 8 16 0 12 0 2z" fill="#fff"/><path d="M2 3 8 2 14 3Q14 11 8 14 2 11 2 3z" fill="#2878e0"/><path d="M4 6 8 9 12 6" fill="none" stroke="#fff" stroke-width="2"/></svg>
      <svg viewBox="0 0 16 16"><path d="M1 2 8 0 15 2Q15 11 8 15 1 11 1 2z" fill="#fff"/><path d="M8 1V15M1 7H15" stroke="#17263c" stroke-width="1.300"/><circle cx="12" cy="11.500" r="4" fill="#18a050"/><path d="M10 11.500 11.500 13 14 10" fill="none" stroke="#fff"/></svg>
      <svg viewBox="0 0 16 16"><circle cx="8" cy="8" r="8" fill="#8c8f94"/><path d="M12 6Q9 3 5 6T7 12L12 10" fill="none" stroke="#eee" stroke-width="1.800"/></svg>
      <svg viewBox="0 0 16 16"><path d="M5 1H11V5H5zM4 5H12V15H4z" fill="none" stroke="#fff" stroke-width="1.200"/><path d="M10 12 12 15 16 10" fill="none" stroke="#ccc"/></svg>
      <svg viewBox="0 0 16 16"><path d="M0 2H16V14H0z" fill="#3c5c14"/><path d="M1 8Q7 1 14 8 8 14 3 9 8 5 10 8 8 10 6 9" fill="none" stroke="#86c818" stroke-width="1.500"/></svg>
      <svg viewBox="0 0 16 16"><path d="M5 0H11V10H5z" fill="#fff"/><path d="M3 7Q3 12 8 12T13 7M8 12V15M5 15.500H11" fill="none" stroke="#fff" stroke-width="1.300"/></svg>
      <svg viewBox="0 0 16 16"><path d="M4 3H16V11H4zM10 11V14M7 14.500H13M0 2H4V7H0zM2 7V13" fill="none" stroke="#fff" stroke-width="1.200"/></svg>
      <svg viewBox="0 0 16 16"><path d="M1 6H3L7 2V14L3 10H1zM9 6Q10 8 9 10M11 4Q14 8 11 12M13 2Q17 8 13 14" fill="none" stroke="#fff"/></svg>
      <span>英</span>
    </div>
    <time>19:58<br>2020/8/24</time>
    <button class="k" aria-label="通知"><svg viewBox="0 0 16 16"><path d="M1 1.500H15V12H11L8 15 8 12H1z" fill="none" stroke="#fff" stroke-width="1.200"/></svg></button>
    <span class="peek"></span>
  </footer>
</div>
</body>
</html>
```
FILE: styles.css
```css
* { box-sizing: border-box; }
body { margin: 0; font: 12px/16px "Noto Sans", "Noto Sans CJK SC", sans-serif; color: #1e395b; background: #d5e1ef; }
button { font: inherit; color: inherit; background: none; border: 0; padding: 0; white-space: nowrap; }
ul { list-style: none; margin: 0; padding: 0; }
u { text-underline-offset: 2px; }
svg { flex: none; }
.defs { position: absolute; }
.app { min-height: 100vh; display: flex; flex-direction: column; overflow: hidden; }
.i16 { width: 16px; height: 16px; }
.i20 { width: 20px; height: 20px; }
.dn { display: inline-block; flex: none; border: 3px solid transparent; border-top: 4px solid #1e2b40; border-bottom: 0; margin-left: 4px; vertical-align: middle; }
.dn.big { border-width: 4px; border-bottom: 0; margin: 0 2px; }
.dn.grey { border-top-color: #9aa4b0; }

/* title bar and menus */
.menubar { height: 27px; display: flex; align-items: center; background: #fdfefe; padding-left: 1px; }
.bar { width: 1px; height: 15px; background: #8a94a4; margin: 0 3px 0 2px; }
.menus { display: flex; align-items: center; }
.menus > li { position: relative; }
.menus > li > button { height: 21px; padding: 0 3px; display: flex; align-items: center; }
.win { padding: 0 3px; display: flex; }
.dn.over { border-top-color: #1e2b40; box-shadow: 0 -3px 0 -2px #1e2b40; }
.open > button { background: #c2e0fa; }
h1 { flex: 1; margin: 0; text-align: center; font-size: 12px; font-weight: 400; color: #111; }
.siemens { font: 800 14px/18px "Open Sans", "Noto Sans", sans-serif; color: #10908a; margin: 3px 34px 0 0; }
.winctl { display: flex; align-self: flex-start; margin-right: 2px; }
.winctl button { width: 45px; height: 25px; }
.winctl svg { width: 12px; height: 12px; }
.winctl .close { background: #e81123; }

.menu { position: absolute; z-index: 10; left: 0; top: 22px; width: 212px; padding: 2px; background: #f0f0f0; border: 1px solid #ccc; box-shadow: 4px 4px 4px rgba(0,0,0,.5); color: #000; }
.menu button { position: relative; width: 100%; height: 32px; padding-left: 37px; display: flex; align-items: center; }
.menu button svg { position: absolute; left: 5px; width: 24px; height: 24px; }
.menu .sub::after { content: ""; margin-left: auto; margin-right: 7px; border: 4px solid transparent; border-left: 4px solid #000; border-right: 0; }
.menu .active { background: #91c9f7; }
.sep { height: 9px; padding: 4px 0 0 33px; }
.sep::before { content: ""; display: block; height: 1px; background: #cdcdcd; }
.has-sub { position: relative; }
.submenu { left: 100%; top: 0; width: 182px; padding: 2px; }
.tooltip { position: absolute; z-index: 11; left: 176px; top: 0; width: 155px; height: 28px; padding-left: 5px; line-height: 27px; white-space: nowrap; background: #fff; border: 1px solid #777; color: #575757; box-shadow: 2px 2px 2px rgba(0,0,0,.4); }
.cursor { position: absolute; z-index: 12; left: 72px; top: 21px; width: 12px; height: 20px; }

/* ribbon tabs */
.tabs { height: 31px; display: flex; align-items: center; background: #dce7f3; border-bottom: 1px solid #b4c4d8; padding-right: 7px; }
.tabs > button { align-self: stretch; padding: 0 13px; }
.tabs .file { width: 78px; margin-right: 2px; color: #fff; background: linear-gradient(#86a6cc, #4b7bb4 45%, #1d5ba8 50%, #4f9ce0 80%, #8cc8f4); border: 1px solid #7a98bc; }
.tabs .on { background: #f4f9fe; border: 1px solid #b4c4d8; border-bottom: 0; margin-bottom: -1px; padding: 0 12px; }
.tabgap { width: 185px; }
.search { margin-left: auto; width: 144px; height: 24px; display: flex; align-items: center; background: #fff; border: 1px solid #8f9db0; padding-right: 4px; }
.search input { flex: 1; min-width: 0; border: 0; outline: 0; padding: 0 3px; background: none; font: inherit; }
.search input::placeholder { color: #9497ac; opacity: 1; }
.search svg { width: 16px; height: 16px; }
.ti { width: 24px; height: 24px; margin-left: 10px; }
.help { width: 20px; height: 20px; margin: 0 3px 0 12px; border-radius: 50%; background: #3c62b8; color: #fff; font: bold 16px/20px "Open Sans", sans-serif; text-align: center; }

.ribbon { position: relative; height: 95px; display: flex; background: linear-gradient(#f4f9fe, #dbe6f4 50%, #d7e2f1); border-bottom: 1px solid #9cb0cc; }
.rgroup { display: flex; align-items: flex-start; padding: 4px 3px 0 0; }
.rgroup.first { width: 463px; padding-left: 6px; }
.rgroup.last { border-right: 1px solid #fff; padding-right: 7px; margin: 0 0 5px; }
.ribbon button { min-width: 41px; padding: 0 4px; line-height: 17px; display: flex; flex-direction: column; align-items: center; }
.ribbon button svg { width: 32px; height: 32px; margin-bottom: 4px; }
.watermark { position: absolute; right: 212px; top: 40px; margin: 0; color: #d01414; font: 600 38px/50px "Noto Serif CJK SC", "Noto Sans CJK SC", serif; }
.end { position: absolute; right: 6px; bottom: 7px; }

/* selection toolbar */
.toolbar { position: relative; height: 34px; display: flex; align-items: center; background: #d5e1ef; }
.tleft { width: 470px; display: flex; align-items: center; padding: 0 4px 0 10px; }
.tleft button { margin-left: 4px; }
.tleft .grey { margin-left: auto; }
.tleft select { width: 148px; height: 24px; margin-left: 6px; border: 1px solid #8f9db0; border-radius: 0; background: #fff; color: #111; font: inherit; }
.tsep { flex: none; width: 14px; height: 22px; background: linear-gradient(#f6faff, #f6faff) center / 1px 100% no-repeat; }
.tspace { width: 41px; }
.t { flex: none; width: 25px; height: 21px; display: grid; place-items: center; border: 1px solid transparent; }
.t.n { width: 20px; }
.t.on { background: #ffd584; border-color: #c8a04c; border-radius: 3px; }
.t svg { width: 18px; height: 18px; }

/* work area */
main { flex: 1; display: flex; }
.work { flex: 1; min-width: 0; display: flex; flex-direction: column; }
.doctab { align-self: flex-start; height: 21px; display: flex; align-items: center; padding: 0 7px 0 8px; background: #4a9aa4; color: #fff; }
.doctab svg { width: 14px; height: 14px; margin-right: 4px; }
.doctab .dd { width: 11px; margin: 0 7px 0 5px; }
.doctab button { font-weight: bold; }
.view { flex: 1; position: relative; background: #222528; border: 1px solid #b0604f; border-top: 2px solid #6b8b94; }
.view svg { position: absolute; inset: 0; width: 100%; height: 100%; }
.axis { font: 13px "Liberation Sans", sans-serif; }

/* part navigator */
.dock { width: 362px; display: flex; }
.panel { position: relative; flex: 1; display: flex; flex-direction: column; padding: 0 7px 7px 9px; border-top: 1px solid #fff; border-left: 1px solid #fff; background: #d7e2f0; }
h2 { margin: 0; height: 38px; padding: 12px 0 0 4px; display: flex; gap: 11px; font-size: 12px; font-weight: 400; color: #111; align-items: center; }
h2 i { width: 14px; height: 13px; border: 1px solid #111; border-top-width: 2px; }
.treebox { flex: 1; display: flex; flex-direction: column; background: #fefefe; border: 1px solid #8d97a6; overflow: hidden; }
table { width: 100%; table-layout: fixed; border-collapse: collapse; color: #111; }
.c2 { width: 100px; }
.c3 { width: 12px; }
th { height: 22px; padding: 0 6px; text-align: left; font-weight: 400; border-right: 1px solid #ddd; overflow: hidden; white-space: nowrap; }
th:first-child { padding-left: 7px; }
th:last-child { border-right: 0; padding-right: 0; }
.up { display: inline-block; margin-left: 10px; border: 4px solid transparent; border-top: 0; border-bottom-color: #aaa; vertical-align: middle; }
td { height: 18px; padding: 0 5px; }
td:first-child { padding-left: 4px; }
td svg { width: 16px; height: 16px; display: block; }
.row { display: flex; align-items: center; height: 18px; padding-left: 2px; gap: 2px; white-space: nowrap; }
.row svg { margin-right: 1px; }
.row svg + svg { margin-left: -3px; }
.ex { position: relative; width: 9px; height: 9px; margin-right: 2px; border: 1px solid #7c8aa8; background: #fff; font: 9px/7px "Liberation Sans", sans-serif; text-align: center; }
.ex.none { border-color: transparent; background: linear-gradient(#999, #999) center / 1px 100% no-repeat; }
.kid { margin-left: 19px; padding-left: 16px; border-left: 1px dotted #999; }
.kid input { appearance: none; width: 13px; height: 13px; margin: 0; border: 1px solid #111; background: #fff url("data:image/svg+xml,%3Csvg xmlns='http://www.w3.org/2000/svg' viewBox='0 0 16 16'%3E%3Cpath d='M1 8 5 6 7 9Q10 3 14 1L16 4Q11 8 9 15L6 15z' fill='%2318b038'/%3E%3C/svg%3E") center / 11px; }
.dim { color: #aaa; }
.cur { font-weight: bold; }
.hscroll { margin-top: auto; height: 17px; display: flex; align-items: center; background: #f0f0f0; }
.hscroll svg { width: 18px; height: 16px; }
.hscroll span { flex: 0 1 213px; height: 15px; background: #c9c9c9; margin-right: auto; }
.grip { height: 8px; width: 34px; margin: 0 auto; border-bottom: 2px dotted #aab4c4; margin-bottom: -2px; }
.acc { height: 27px; padding: 0 12px 5px 11px; display: flex; align-items: center; justify-content: space-between; background: linear-gradient(#f8f8fa, #eaebee 80%, #f6f6f8); border-top: 1px solid #ccd4e0; }
.acc svg { width: 9px; height: 10px; }
.ime { position: absolute; right: -4px; bottom: 80px; height: 23px; width: 184px; padding-right: 2px; display: flex; align-items: center; justify-content: space-between; background: #fff; border: 1px solid #ddd; }
.ime svg { width: 16px; height: 16px; }
.ime .sg { width: 28px; height: 28px; margin: -3px 0 -3px -2px; }
.ime b { color: #1c68b0; font-size: 14px; }
.res { width: 32px; background: #bcc5da; display: flex; flex-direction: column; align-items: flex-start; }
.res div { display: flex; flex-direction: column; margin: 0 0 12px 1px; }
.res button { width: 27px; height: 42px; display: grid; place-items: center; background: #f8fafd; border-bottom: 1px solid #c4ccdc; }
.res button.on { width: 29px; background: #dce6f5; }
.res .gear { width: 32px; height: 31px; margin-bottom: 12px; background: none; border: 0; }
.res svg { width: 24px; height: 28px; }
.res .gear svg { width: 14px; height: 14px; }

/* status bar and taskbar */
.status { height: 23px; display: flex; align-items: center; padding: 0 3px; background: linear-gradient(#dfeaf6, #b8cce4); border-top: 1px solid #fff; }
.status span { flex: 0 0 900px; font-weight: bold; }
.status i { width: 1px; height: 22px; background: #eef4fb; }
.status .cell { width: 21px; margin-left: auto; background: none; border-left: 1px solid #f0f6fc; }
.status div { width: 76px; height: 22px; display: flex; gap: 4px; align-items: center; padding-left: 3px; margin-right: 15px; border: 1px solid #f0f6fc; border-width: 0 1px; }
.status svg { width: 16px; height: 16px; }
.taskbar { height: 40px; display: flex; align-items: center; color: #fff; background: linear-gradient(90deg, #21373f, #1e3040 40%, #17253c); }
.k { width: 48px; height: 40px; display: grid; place-items: center; }
.k svg { width: 16px; height: 16px; }
.app1 { height: 40px; width: 152px; margin: 0 5px 0 7px; display: flex; align-items: center; gap: 8px; padding-left: 6px; border-bottom: 2px solid #76b2e2; }
.app1 svg { width: 20px; height: 20px; }
.taskbar .cur { width: 160px; margin: 0; padding-left: 10px; gap: 4px; font-weight: 400; background: #4b5c65; }
.app1.cur svg { width: 24px; height: 24px; }
.tray { margin-left: auto; display: flex; gap: 8px; align-items: center; }
.tray svg { width: 16px; height: 16px; }
.tray span { width: 16px; font-weight: bold; }
time { width: 80px; text-align: center; line-height: 19px; }
.taskbar .k:last-of-type { width: 32px; }
.peek { width: 1px; height: 40px; margin: 0 4px 0 12px; background: #5a6678; }
```
